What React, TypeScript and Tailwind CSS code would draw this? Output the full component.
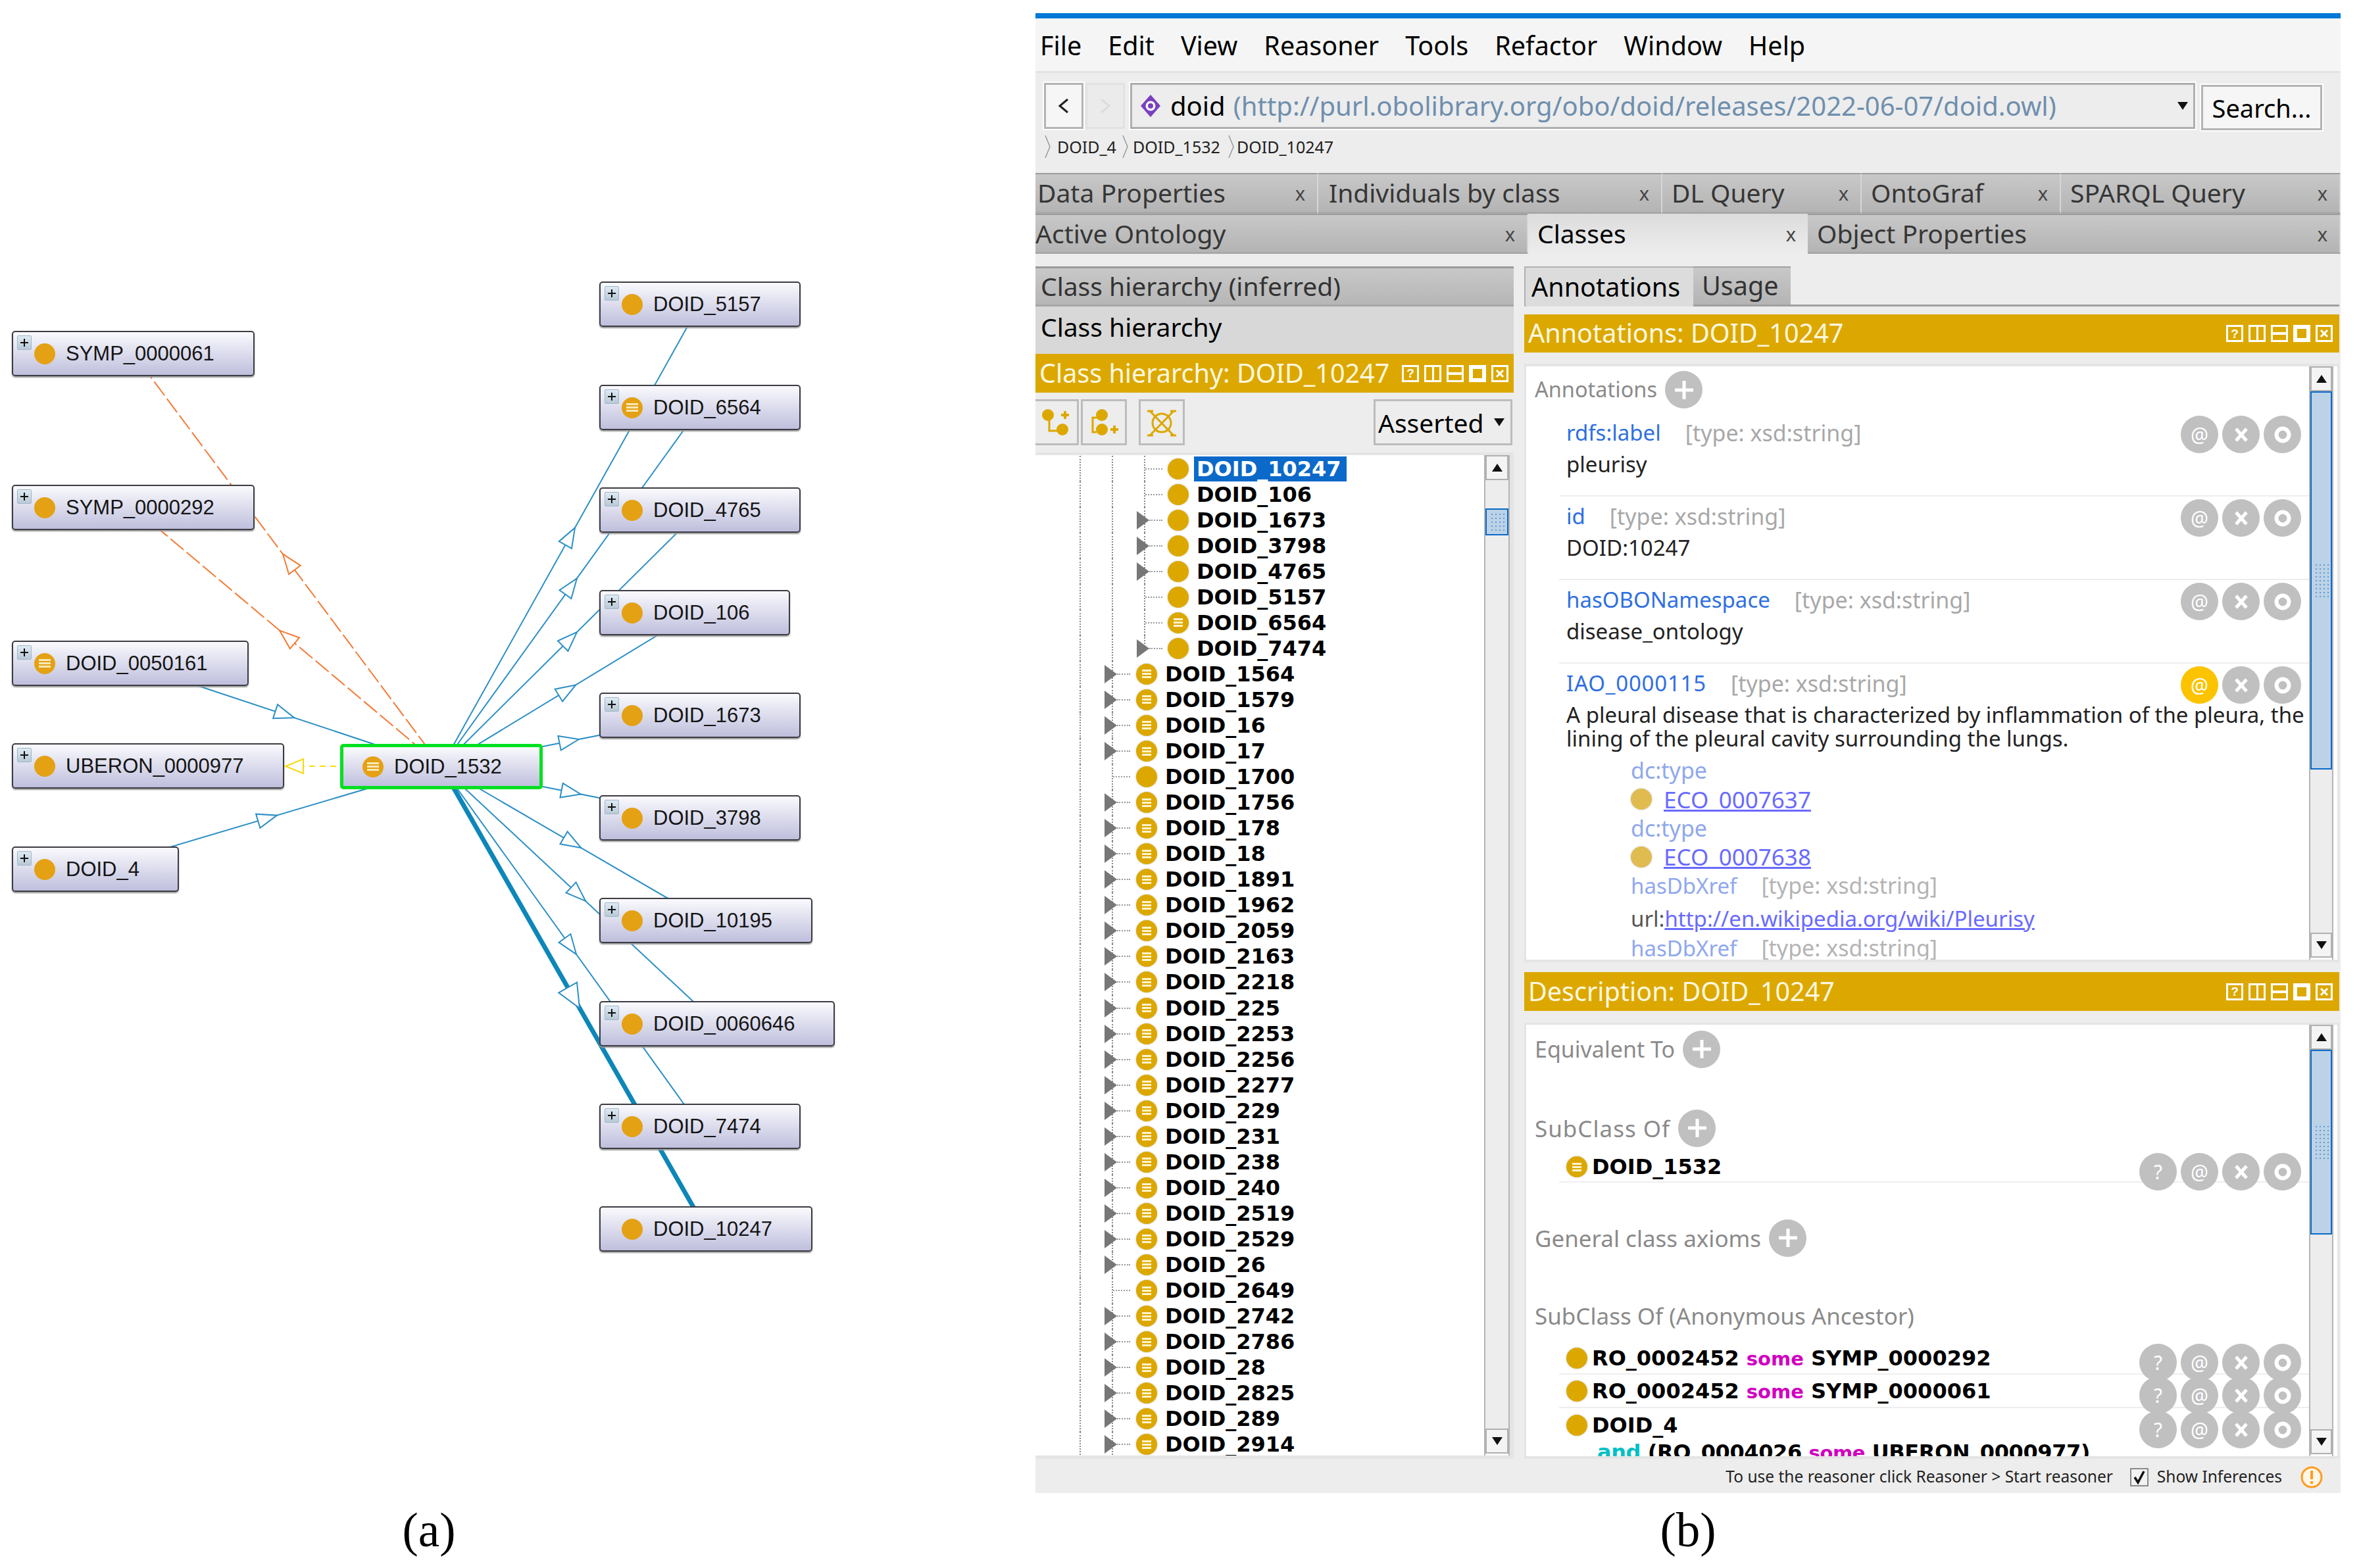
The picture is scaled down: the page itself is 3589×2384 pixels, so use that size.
import React from "react";

type N = { id: string; x: number; y: number; w: number; plus?: boolean; lines?: boolean; selected?: boolean };

const nodes: N[] = [
  { id: "SYMP_0000061", x: 18, y: 503, w: 369, plus: true },
  { id: "SYMP_0000292", x: 18, y: 737, w: 369, plus: true },
  { id: "DOID_0050161", x: 18, y: 974, w: 360, plus: true, lines: true },
  { id: "UBERON_0000977", x: 18, y: 1130, w: 414, plus: true },
  { id: "DOID_4", x: 18, y: 1287, w: 254, plus: true },
  { id: "DOID_1532", x: 517, y: 1131, w: 308, lines: true, selected: true },
  { id: "DOID_5157", x: 911, y: 428, w: 306, plus: true },
  { id: "DOID_6564", x: 911, y: 585, w: 306, plus: true, lines: true },
  { id: "DOID_4765", x: 911, y: 741, w: 306, plus: true },
  { id: "DOID_106", x: 911, y: 897, w: 290, plus: true },
  { id: "DOID_1673", x: 911, y: 1053, w: 306, plus: true },
  { id: "DOID_3798", x: 911, y: 1209, w: 306, plus: true },
  { id: "DOID_10195", x: 911, y: 1365, w: 324, plus: true },
  { id: "DOID_0060646", x: 911, y: 1522, w: 358, plus: true },
  { id: "DOID_7474", x: 911, y: 1678, w: 306, plus: true },
  { id: "DOID_10247", x: 911, y: 1834, w: 324 },
];

const center = (id: string) => {
  const n = nodes.find((m) => m.id === id)!;
  return { x: n.x + n.w / 2, y: n.y + 34.5 };
};

type E = { to: string; from?: string; tip: number; kind?: "blue" | "thick" | "orange" | "yellow" };
const edges: E[] = [
  { to: "DOID_5157", tip: 874 },
  { to: "DOID_6564", tip: 877 },
  { to: "DOID_4765", tip: 877 },
  { to: "DOID_106", tip: 875 },
  { to: "DOID_1673", tip: 880 },
  { to: "DOID_3798", tip: 883 },
  { to: "DOID_10195", tip: 883 },
  { to: "DOID_0060646", tip: 890 },
  { to: "DOID_7474", tip: 876 },
  { to: "DOID_10247", tip: 881, kind: "thick" },
  { from: "DOID_0050161", to: "DOID_1532", tip: 447 },
  { from: "DOID_4", to: "DOID_1532", tip: 421 },
  { to: "UBERON_0000977", tip: 434, kind: "yellow" },
  { to: "SYMP_0000061", tip: 430, kind: "orange" },
  { to: "SYMP_0000292", tip: 425, kind: "orange" },
];

function GraphEdge({ e }: { e: E }) {
  const a = center(e.from ?? "DOID_1532");
  const b = center(e.to);
  const t = (e.tip - a.x) / (b.x - a.x);
  const tx = e.tip;
  const ty = a.y + t * (b.y - a.y);
  const len = Math.hypot(b.x - a.x, b.y - a.y);
  const ux = (b.x - a.x) / len;
  const uy = (b.y - a.y) / len;
  const kind = e.kind ?? "blue";
  const L = kind === "thick" ? 36 : kind === "yellow" ? 27 : 30;
  const hw = kind === "thick" ? 16 : 11;
  const bx = tx - L * ux;
  const by = ty - L * uy;
  const pts = `${tx},${ty} ${bx - uy * hw},${by + ux * hw} ${bx + uy * hw},${by - ux * hw}`;
  const color = kind === "thick" ? "#0d86b9" : kind === "orange" ? "#f47a35" : kind === "yellow" ? "#f7da10" : "#2c8fc6";
  const arrowColor = kind === "thick" ? "#2c8fc6" : color;
  const w = kind === "thick" ? 7 : 2;
  const dash = kind === "orange" ? "26 6" : kind === "yellow" ? "9 7" : undefined;
  return (
    <g>
      <line x1={a.x} y1={a.y} x2={b.x} y2={b.y} stroke={color} strokeWidth={w} strokeDasharray={dash} />
      <polygon points={pts} fill="#fff" stroke={arrowColor} strokeWidth={2} />
    </g>
  );
}

function Bars({ w, h, gap }: { w: string; h: string; gap: string }) {
  return (
    <div className={`flex flex-col ${gap}`}>
      <div className={`${w} ${h} bg-[#f8e8b8]`} />
      <div className={`${w} ${h} bg-[#f8e8b8]`} />
      <div className={`${w} ${h} bg-[#f8e8b8]`} />
    </div>
  );
}

function GraphNode({ n }: { n: N }) {
  return (
    <div
      className={`absolute h-[69px] flex items-center rounded-[5px] bg-gradient-to-b from-[#fafafd] to-[#bfbfdd] ${
        n.selected
          ? "border-[5px] border-[#00e020] pl-[29px]"
          : "border-2 border-[#3c3c44] pl-[32px] shadow-[0_2px_2px_#9a9a9a]"
      }`}
      style={{ left: n.x, top: n.y, width: n.w }}
    >
      {n.plus && (
        <div className="absolute left-[6px] top-[5px] w-[22px] h-[22px] flex items-center justify-center border border-[#9fb7c9] rounded-[2px] bg-gradient-to-b from-[#dfeaf2] to-[#b8c9d6]">
          <svg width="14" height="14" viewBox="0 0 14 14">
            <path d="M7 1v12M1 7h12" stroke="#111" strokeWidth="2" />
          </svg>
        </div>
      )}
      <div className="w-[32px] h-[32px] shrink-0 rounded-full bg-[#e4a114] flex items-center justify-center">
        {n.lines && <Bars w="w-[18px]" h="h-[3px]" gap="gap-[2px]" />}
      </div>
      <span className="ml-[16px] font-['Liberation_Sans',sans-serif] text-[31px] leading-none whitespace-nowrap text-[#151515]">
        {n.id}
      </span>
    </div>
  );
}

function Graph() {
  return (
    <div className="relative w-[1574px] h-[2270px]">
      <svg className="absolute inset-0" width="1574" height="2270">
        {edges.map((e) => (
          <GraphEdge key={e.to + (e.from ?? "")} e={e} />
        ))}
      </svg>
      {nodes.map((n) => (
        <GraphNode key={n.id} n={n} />
      ))}
    </div>
  );
}

function Caption({ children, cls }: { children: React.ReactNode; cls: string }) {
  return (
    <div className={`${cls} h-[114px] pt-[12px] text-center font-['Liberation_Serif',serif] text-[73px] leading-[90px] text-black`}>
      {children}
    </div>
  );
}

const row1 = [
  { t: "Data Properties", w: "w-[430px]", p: "pl-[3px]" },
  { t: "Individuals by class", w: "w-[523px]", p: "pl-[16px]" },
  { t: "DL Query", w: "w-[303px]", p: "pl-[14px]" },
  { t: "OntoGraf", w: "w-[303px]", p: "pl-[14px]" },
  { t: "SPARQL Query", w: "w-[425px]", p: "pl-[14px]" },
];
const row2 = [
  { t: "Active Ontology", w: "w-[749px]", p: "pl-[0px]" },
  { t: "Classes", w: "w-[425px]", p: "pl-[14px]", active: true },
  { t: "Object Properties", w: "w-[810px]", p: "pl-[14px]" },
];

function Tab({ t, w, p, active }: { t: string; w: string; p: string; active?: boolean }) {
  return (
    <div
      className={`${w} ${p} h-full flex items-center justify-between pr-[18px] text-[39px] leading-none whitespace-nowrap ${
        active
          ? "bg-gradient-to-b from-[#dcdcdc] to-[#ededed] text-black"
          : "bg-gradient-to-b from-[#c8c8c8] to-[#b4b4b4] text-[#363636] border-r-2 border-[#d6d6d6] border-b-[3px] border-b-[#a8a8a8] border-t-2 border-t-[#9c9c9c]"
      }`}
    >
      <span className="-mt-[2px]">{t}</span>
      <span className="text-[29px] text-[#444]">x</span>
    </div>
  );
}

function TriDown({ cls = "" }: { cls?: string }) {
  return (
    <svg className={cls} width="18" height="14" viewBox="0 0 18 14">
      <path d="M1 1h16L9 13z" fill="#111" />
    </svg>
  );
}
function TriUp({ cls = "" }: { cls?: string }) {
  return (
    <svg className={cls} width="18" height="14" viewBox="0 0 18 14">
      <path d="M1 13h16L9 1z" fill="#111" />
    </svg>
  );
}

function Chevron() {
  return (
    <svg className="shrink-0" width="10" height="36" viewBox="0 0 10 36">
      <path d="M1 1l7 17-7 17" fill="none" stroke="#999" strokeWidth="1.5" />
    </svg>
  );
}

function TopBars() {
  return (
    <>
      <div className="h-[8px] bg-[#0078d7]" />
      <div className="h-[83px] bg-[#f5f5f5] border-b-[3px] border-[#e3e3e3] flex items-center gap-[40px] pl-[7px] pt-[4px] text-[39.5px] leading-none text-black">
        {["File", "Edit", "View", "Reasoner", "Tools", "Refactor", "Window", "Help"].map((m) => (
          <span key={m}>{m}</span>
        ))}
      </div>
      <div className="h-[94px] flex items-start pl-[13px]">
        <div className="mt-[15px] w-[60px] h-[70px] mr-[3px] border-[3px] border-[#b4b4b4] bg-[#f6f6f6] flex items-center justify-center shadow-[0_0_0_2px_#fff]">
          <svg width="20" height="26" viewBox="0 0 20 26">
            <path d="M16 3L4 13l12 10" fill="none" stroke="#222" strokeWidth="3" />
          </svg>
        </div>
        <div className="mt-[15px] w-[60px] h-[70px] mr-[8px] border-[3px] border-[#e2e2e2] bg-[#ebebeb] flex items-center justify-center">
          <svg width="20" height="26" viewBox="0 0 20 26">
            <path d="M4 3l12 10L4 23" fill="none" stroke="#dcdcdc" strokeWidth="3" />
          </svg>
        </div>
        <div className="mt-[15px] w-[1619px] h-[70px] border-[3px] border-[#aeaeae] bg-[#ededed] shadow-[0_0_0_2px_#fff] flex items-center pl-[12px] pr-[7px] text-[40px] leading-none whitespace-nowrap">
          <svg className="shrink-0" width="32" height="36" viewBox="0 0 32 36">
            <path d="M16 1l15 17-15 17L1 18z" fill="#7b3fbe" />
            <circle cx="16" cy="18" r="7.5" fill="#fff" />
            <circle cx="16" cy="18" r="4" fill="#7b3fbe" />
          </svg>
          <span className="ml-[14px] text-black">doid</span>
          <span className="ml-[12px] text-[#6f8fae]">(http://purl.obolibrary.org/obo/doid/releases/2022-06-07/doid.owl)</span>
          <TriDown cls="ml-auto" />
        </div>
        <div className="ml-[9px] mt-[18px] w-[184px] h-[69px] border-[3px] border-[#b4b4b4] bg-[#f6f6f6] shadow-[0_0_0_2px_#fff] flex items-center justify-center text-[38px] leading-none text-black">
          Search...
        </div>
      </div>
      <div className="h-[58px]">
        <div className="h-[36px] flex items-center pl-[14px] text-[25px] leading-none text-[#222]">
          <Chevron />
          <span className="ml-[9px] w-[99px]">DOID_4</span>
          <Chevron />
          <span className="ml-[6px] w-[145px]">DOID_1532</span>
          <Chevron />
          <span className="ml-[3px]">DOID_10247</span>
        </div>
      </div>
      <div className="h-[62px] flex">
        {row1.map((t) => (
          <Tab key={t.t} {...t} />
        ))}
      </div>
      <div className="h-[61px] flex">
        {row2.map((t) => (
          <Tab key={t.t} {...t} />
        ))}
      </div>
    </>
  );
}

function HeaderIcons() {
  return (
    <div className="flex gap-[8px] items-center">
      <div className="w-[26px] h-[26px] border-[3px] border-white flex items-center justify-center text-[19px] leading-none font-bold text-white font-['Liberation_Sans',sans-serif]">?</div>
      <div className="w-[26px] h-[26px] border-[3px] border-white flex justify-center">
        <div className="w-[3px] h-full bg-white" />
      </div>
      <div className="w-[26px] h-[26px] border-[3px] border-white flex flex-col justify-center">
        <div className="w-full h-[4px] bg-white" />
      </div>
      <div className="w-[26px] h-[26px] border-[6px] border-white" />
      <div className="w-[26px] h-[26px] border-[3px] border-white flex items-center justify-center">
        <svg width="14" height="14" viewBox="0 0 14 14">
          <path d="M2 2l10 10M12 2L2 12" stroke="#fff" strokeWidth="3" />
        </svg>
      </div>
    </div>
  );
}

function ViewHeader({ title, h, pr }: { title: string; h: string; pr: string }) {
  return (
    <div className={`${h} ${pr} bg-[#dca800] flex items-center justify-between pl-[6px] text-[39.5px] leading-none text-[#fff8e0] whitespace-nowrap`}>
      <span>{title}</span>
      <HeaderIcons />
    </div>
  );
}

function SmallCircle({ lines, cls = "bg-[#dca800]" }: { lines?: boolean; cls?: string }) {
  return (
    <div className={`w-[32px] h-[32px] shrink-0 rounded-full ${cls} shadow-[0_0_3px_#c8c8c8] flex items-center justify-center`}>
      {lines && (
        <div className="flex flex-col gap-[2px]">
          <div className="w-[14px] h-[3px] bg-[#fff4d0]" />
          <div className="w-[14px] h-[3px] bg-[#fff4d0]" />
          <div className="w-[14px] h-[3px] bg-[#fff4d0]" />
        </div>
      )}
    </div>
  );
}

function ScrollButton({ up, h }: { up?: boolean; h: string }) {
  return (
    <div className={`${h} shrink-0 border-2 border-[#b0b0b0] bg-[#f4f4f4] flex items-center justify-center`}>
      {up ? <TriUp /> : <TriDown />}
    </div>
  );
}

function Grip({ h }: { h: string }) {
  return (
    <div className={`${h} w-[22px] bg-[radial-gradient(#5b9bd8_1.5px,transparent_1.5px)] bg-[length:6px_6px]`} />
  );
}

const level2 = [
  { id: "DOID_10247", sel: true },
  { id: "DOID_106" },
  { id: "DOID_1673", tri: true },
  { id: "DOID_3798", tri: true },
  { id: "DOID_4765", tri: true },
  { id: "DOID_5157" },
  { id: "DOID_6564", lines: true },
  { id: "DOID_7474", tri: true, last: true },
];
const level1 = "1564 1579 16 17 1700 1756 178 18 1891 1962 2059 2163 2218 225 2253 2256 2277 229 231 238 240 2519 2529 26 2649 2742 2786 28 2825 289 2914".split(" ");

function Triangle() {
  return (
    <svg className="-ml-[13px] shrink-0" width="19" height="28" viewBox="0 0 19 28">
      <path d="M0 0l19 14L0 28z" fill="#777" />
    </svg>
  );
}

function GuideA() {
  return <div className="w-[49px] self-stretch border-l-2 border-dotted border-[#8a8a8a]" />;
}
function GuideB() {
  return <div className="w-[2px] self-stretch border-l-2 border-dotted border-[#8a8a8a]" />;
}

function TreeLabel({ id, sel }: { id: string; sel?: boolean }) {
  return (
    <span
      className={`ml-[8px] h-[38px] px-[4px] flex items-center font-['DejaVu_Sans',sans-serif] font-bold text-[32px] leading-none whitespace-nowrap ${
        sel ? "bg-[#0b69c9] text-white pr-[8px]" : "text-black"
      }`}
    >
      {id}
    </span>
  );
}

function Tree() {
  return (
    <div className="flex-1 overflow-hidden pt-[1px]">
      {level2.map((r) => (
        <div key={r.id} className="h-[39.06px] flex items-center">
          <div className="w-[67px]" />
          <GuideA />
          <div className="w-[49px] self-stretch border-l-2 border-dotted border-[#8a8a8a]" />
          <div
            className={`w-[2px] border-l-2 border-dotted border-[#8a8a8a] ${r.last ? "self-start h-1/2" : "self-stretch"}`}
          />
          {r.tri && <Triangle />}
          <div className={`${r.tri ? "w-[20px]" : "w-[26px]"} border-t-2 border-dotted border-[#999]`} />
          <div className="ml-[8px]">
            <SmallCircle lines={r.lines} />
          </div>
          <TreeLabel id={r.id} sel={r.sel} />
        </div>
      ))}
      {level1.map((id) => {
        const tri = id !== "1700" && id !== "2649";
        return (
          <div key={id} className="h-[39.06px] flex items-center">
            <div className="w-[67px]" />
            <GuideA />
            <GuideB />
            {tri && <Triangle />}
            <div className={`${tri ? "w-[20px]" : "w-[26px]"} border-t-2 border-dotted border-[#999]`} />
            <div className="ml-[9px]">
              <SmallCircle lines={id !== "1700"} />
            </div>
            <TreeLabel id={`DOID_${id}`} />
          </div>
        );
      })}
    </div>
  );
}

function LeftColumn() {
  return (
    <div className="w-[727px] flex flex-col">
      <div className="h-[61px] bg-gradient-to-b from-[#c8c8c8] to-[#b6b6b6] border-t-[3px] border-t-[#9a9a9a] border-b-[3px] border-b-[#a6a6a6] flex items-center pl-[8px] pb-[2px] text-[39px] leading-none text-[#333]">
        Class hierarchy (inferred)
      </div>
      <div className="h-[72px] bg-[#d8d8d8] flex items-center pl-[8px] pb-[12px] text-[39px] leading-none text-black">
        Class hierarchy
      </div>
      <ViewHeader title="Class hierarchy: DOID_10247" h="h-[59px]" pr="pr-[8px]" />
      <div className="h-[91px] pt-[10px] flex items-start">
        <div className="w-[66px] h-[70px] border-[3px] border-l-0 border-[#bcbcbc] shrink-0">
          <svg width="63" height="64" viewBox="0 0 63 64">
            <circle cx="19" cy="21" r="9" fill="#dca800" />
            <circle cx="41" cy="43" r="9" fill="#dca800" />
            <path d="M21 28v17h14" fill="none" stroke="#dca800" strokeWidth="3" />
            <path d="M45 15v12M39 21h12" stroke="#dca800" strokeWidth="4" />
          </svg>
        </div>
        <div className="ml-[3px] w-[70px] h-[70px] border-[3px] border-[#bcbcbc] shrink-0">
          <svg width="64" height="64" viewBox="0 0 64 64">
            <circle cx="29" cy="21" r="9" fill="#dca800" />
            <circle cx="29" cy="43" r="9" fill="#dca800" />
            <path d="M24 25H15v22h6" fill="none" stroke="#dca800" strokeWidth="3" />
            <path d="M48 37v12M42 43h12" stroke="#dca800" strokeWidth="4" />
          </svg>
        </div>
        <div className="ml-[18px] w-[70px] h-[70px] border-[3px] border-[#bcbcbc] shrink-0">
          <svg width="64" height="64" viewBox="0 0 64 64">
            <circle cx="32" cy="33" r="14" fill="none" stroke="#dca800" strokeWidth="3" />
            <path d="M14 15l36 37M50 15L14 52M10 15h9M45 15h9M10 52h9M45 52h9" fill="none" stroke="#dca800" strokeWidth="3" />
          </svg>
        </div>
        <div className="ml-[287px] w-[211px] h-[70px] border-[3px] border-[#bcbcbc] flex items-center pl-[4px] pr-[8px] justify-between text-[39px] leading-none text-black">
          <span>Asserted</span>
          <TriDown />
        </div>
      </div>
      <div className="h-[1530px] border-t-[4px] border-b-[5px] border-r-[6px] border-[#e4e4e4] bg-white flex overflow-hidden">
        <Tree />
        <div className="w-[39px] flex flex-col bg-[#ededed] border-x-2 border-[#b4b4b4]">
          <ScrollButton up h="h-[38px]" />
          <div className="h-[43px] shrink-0" />
          <div className="h-[41px] shrink-0 border-2 border-[#0b69c9] bg-[#bcd2e6] flex items-center justify-center">
            <Grip h="h-[30px]" />
          </div>
          <div className="flex-1" />
          <ScrollButton h="h-[38px]" />
          <div className="h-[3px] bg-white" />
        </div>
      </div>
    </div>
  );
}

function Round({ children, yellow }: { children: React.ReactNode; yellow?: boolean }) {
  return (
    <div className={`w-[57px] h-[57px] shrink-0 rounded-full ${yellow ? "bg-[#fcc300]" : "bg-[#c0c0c0]"} flex items-center justify-center text-white text-[30px] leading-none`}>
      {children}
    </div>
  );
}

function Actions({ q, yellow, cls = "" }: { q?: boolean; yellow?: boolean; cls?: string }) {
  return (
    <div className={`flex gap-[6px] pr-[12px] ${cls}`}>
      {q && <Round>?</Round>}
      <Round yellow={yellow}>@</Round>
      <Round>
        <svg width="24" height="24" viewBox="0 0 24 24">
          <path d="M4 3l16 18M20 3L4 21" stroke="#fff" strokeWidth="5" />
        </svg>
      </Round>
      <Round>
        <svg width="28" height="28" viewBox="0 0 28 28">
          <circle cx="14" cy="14" r="9.5" fill="none" stroke="#fff" strokeWidth="6" />
        </svg>
      </Round>
    </div>
  );
}

function PlusHeading({ title, cls, size, noPlus }: { title: string; cls: string; size: string; noPlus?: boolean }) {
  return (
    <div className={`${cls} ${size} flex items-center pl-[13px] leading-none text-[#8a8a8a] whitespace-nowrap`}>
      <span>{title}</span>
      {!noPlus && (
        <div className="ml-[12px] w-[57px] h-[57px] rounded-full bg-[#c0c0c0] flex items-center justify-center">
          <svg width="32" height="32" viewBox="0 0 32 32">
            <path d="M16 2v28M2 16h28" stroke="#fff" strokeWidth="5" />
          </svg>
        </div>
      )}
    </div>
  );
}

const TYPE = "[type: xsd:string]";

function AnnotRow({ label, value }: { label: string; value: string }) {
  return (
    <div className="h-[127px] ml-[50px] pl-[11px] border-b-2 border-[#eeeeee] flex justify-between">
      <div className="pt-[12px] text-[33px] leading-[36px]">
        <div className="flex gap-[37px] items-center">
          <span className="text-[#2f6fe0]">{label}</span>
          <span className="text-[#a8a8a8] text-[34px]">{TYPE}</span>
        </div>
        <div className="mt-[12px] text-[#222]">{value}</div>
      </div>
      <Actions cls="pt-[4px]" />
    </div>
  );
}

function AnnotationsPanel() {
  return (
    <div className="h-[910px] border-x-[3px] border-y-[4px] border-[#e4e4e4] bg-white flex overflow-hidden">
      <div className="w-[1190px] overflow-hidden">
        <PlusHeading title="Annotations" cls="h-[71px]" size="text-[32.5px]" />
        <AnnotRow label="rdfs:label" value="pleurisy" />
        <AnnotRow label="id" value="DOID:10247" />
        <AnnotRow label="hasOBONamespace" value="disease_ontology" />
        <div className="ml-[50px] pl-[11px] h-[48px] flex justify-between pt-[12px] text-[33px] leading-[36px]">
          <div className="flex gap-[37px] items-center h-[36px]">
            <span className="text-[#2f6fe0] tracking-[0.8px]">IAO_0000115</span>
            <span className="text-[#a8a8a8] text-[34px]">{TYPE}</span>
          </div>
          <Actions yellow cls="-mt-[8px] h-[57px]" />
        </div>
        <div className="ml-[61px] mt-[12px] w-[1135px] text-[33px] leading-[36px] text-[#222]">
          A pleural disease that is characterized by inflammation of the pleura, the lining of the pleural cavity surrounding the lungs.
        </div>
        <div className="ml-[159px] mt-[8px] text-[33px] leading-none">
          <div className="h-[44px] flex items-center text-[#8fa8ee] text-[34px]">dc:type</div>
          <div className="h-[44px] flex items-center">
            <SmallCircle cls="bg-[#e0bc50]" />
            <span className="ml-[18px] text-[35px] text-[#6a6aff] underline">ECO_0007637</span>
          </div>
          <div className="h-[44px] flex items-center text-[#8fa8ee] text-[34px]">dc:type</div>
          <div className="h-[43px] flex items-center">
            <SmallCircle cls="bg-[#e0bc50]" />
            <span className="ml-[18px] text-[35px] text-[#6a6aff] underline">ECO_0007638</span>
          </div>
          <div className="h-[44px] flex items-center gap-[37px]">
            <span className="text-[#8fa8ee]">hasDbXref</span>
            <span className="text-[#b4b4b4] text-[34px]">{TYPE}</span>
          </div>
          <div className="mt-[3px] h-[50px] flex items-center">
            <span className="text-[#555]">url:</span>
            <span className="text-[#6a6aff] underline">http://en.wikipedia.org/wiki/Pleurisy</span>
          </div>
          <div className="-mt-[2px] h-[44px] flex items-center gap-[37px]">
            <span className="text-[#8fa8ee]">hasDbXref</span>
            <span className="text-[#b4b4b4] text-[34px]">{TYPE}</span>
          </div>
        </div>
      </div>
      <div className="w-[37px] flex flex-col bg-[#ededed] border-x-2 border-[#b4b4b4]">
        <ScrollButton up h="h-[38px]" />
        <div className="h-[575px] shrink-0 border-2 border-[#0b69c9] bg-[#bcd2e6] flex items-center justify-center">
          <Grip h="h-[54px]" />
        </div>
        <div className="flex-1" />
        <ScrollButton h="h-[38px]" />
        <div className="h-[3px] bg-white" />
      </div>
    </div>
  );
}

const BOLD = "font-['DejaVu_Sans',sans-serif] font-bold text-[32px] leading-none text-black whitespace-nowrap";

function ExprRow({ h, children, pt }: { h: string; children: React.ReactNode; pt: string }) {
  return (
    <div className={`${h} ml-[50px] pl-[11px] border-b-2 border-[#eeeeee] flex justify-between items-start`}>
      <div className={`${pt} flex items-center gap-[7px] ${BOLD}`}>{children}</div>
    </div>
  );
}

function Some() {
  return <span className="text-[#d000c0] text-[29px]">some</span>;
}

function ExprActions({ top }: { top: string }) {
  return (
    <div className={`h-0 overflow-visible flex justify-end ${top}`}>
      <Actions q />
    </div>
  );
}

function DescriptionPanel() {
  return (
    <div className="h-[663px] border-x-[3px] border-t-[3px] border-b-[4px] border-[#e4e4e4] bg-white flex overflow-hidden">
      <div className="w-[1190px] overflow-hidden">
        <PlusHeading title="Equivalent To" cls="h-[74px]" size="text-[34px]" />
        <PlusHeading title="SubClass Of" cls="mt-[46px] h-[74px] tracking-[1px]" size="text-[35px]" />
        <ExprActions top="translate-y-[1px]" />
        <ExprRow h="h-[46px]" pt="pt-[6px]">
          <SmallCircle lines />
          <span>DOID_1532</span>
        </ExprRow>
        <PlusHeading title="General class axioms" cls="mt-[47px] h-[74px]" size="text-[35px]" />
        <PlusHeading title="SubClass Of (Anonymous Ancestor)" cls="mt-[44px] h-[74px]" size="text-[35px]" noPlus />
        <div className="mt-[3px]">
          <ExprActions top="translate-y-[3px]" />
          <ExprRow h="h-[50px]" pt="pt-[9px]">
            <SmallCircle />
            <span>
              RO_0002452 <Some /> SYMP_0000292
            </span>
          </ExprRow>
          <ExprActions top="translate-y-[3px]" />
          <ExprRow h="h-[51px]" pt="pt-[9px]">
            <SmallCircle />
            <span>
              RO_0002452 <Some /> SYMP_0000061
            </span>
          </ExprRow>
          <ExprActions top="translate-y-[4px]" />
          <div className="ml-[50px] pl-[11px] pt-[10px]">
            <div className={`flex items-center gap-[7px] ${BOLD}`}>
              <SmallCircle />
              <span>DOID_4</span>
            </div>
            <div className={`ml-[47px] mt-[9px] tracking-[-0.4px] ${BOLD}`}>
              <span className="text-[#00c0c4]">and</span> (RO_0004026 <Some /> UBERON_0000977)
            </div>
          </div>
        </div>
      </div>
      <div className="w-[37px] flex flex-col bg-[#ededed] border-x-2 border-[#b4b4b4]">
        <ScrollButton up h="h-[38px]" />
        <div className="h-[281px] shrink-0 border-2 border-[#0b69c9] bg-[#bcd2e6] flex items-center justify-center">
          <Grip h="h-[54px]" />
        </div>
        <div className="flex-1" />
        <ScrollButton h="h-[38px]" />
        <div className="h-[3px] bg-white" />
      </div>
    </div>
  );
}

function RightColumn() {
  return (
    <div className="w-[1239px] flex flex-col">
      <div className="h-[61px] flex shrink-0">
        <div className="w-[257px] border-l-2 border-t-2 border-[#b0b0b0] bg-[#dcdcdc] flex items-center pl-[9px] text-[39.5px] leading-none text-black">
          Annotations
        </div>
        <div className="w-[148px] bg-gradient-to-b from-[#c8c8c8] to-[#b4b4b4] border-t-2 border-t-[#a0a0a0] border-b-[3px] border-b-[#a0a0a0] flex items-center pl-[13px] text-[39.5px] leading-none text-[#333]">
          Usage
        </div>
        <div className="flex-1 border-b-[3px] border-[#a0a0a0]" />
      </div>
      <div className="mt-[12px]">
        <ViewHeader title="Annotations: DOID_10247" h="h-[58px]" pr="pr-[10px]" />
      </div>
      <div className="mt-[17px]">
        <AnnotationsPanel />
      </div>
      <div className="mt-[15px]">
        <ViewHeader title="Description: DOID_10247" h="h-[59px]" pr="pr-[10px]" />
      </div>
      <div className="mt-[18px]">
        <DescriptionPanel />
      </div>
    </div>
  );
}

function StatusBar() {
  return (
    <div className="h-[52px] pt-[3px] flex items-center justify-end pr-[27px] text-[24.5px] leading-none text-[#222] whitespace-nowrap">
      <span>To use the reasoner click Reasoner &gt; Start reasoner</span>
      <div className="ml-[26px] w-[28px] h-[28px] border-2 border-[#8a8a8a] bg-[#f2f2f2] flex items-center justify-center">
        <svg width="20" height="22" viewBox="0 0 20 22">
          <path d="M3 11l5 8 9-17" fill="none" stroke="#111" strokeWidth="3.5" />
        </svg>
      </div>
      <span className="ml-[13px]">Show Inferences</span>
      <svg className="ml-[28px]" width="34" height="36" viewBox="0 0 34 36">
        <circle cx="17" cy="18" r="15" fill="#fff6e6" stroke="#ff9c22" strokeWidth="3" />
        <path d="M17 8v13M17 24v4" stroke="#ff9c22" strokeWidth="4" />
      </svg>
    </div>
  );
}

function Protege() {
  return (
    <div className="w-[1984px] h-[2250px] bg-[#ededed] flex flex-col font-['Noto_Sans',sans-serif]">
      <TopBars />
      <div className="mt-[19px] flex gap-[16px]">
        <LeftColumn />
        <RightColumn />
      </div>
      <StatusBar />
    </div>
  );
}

export default function App() {
  return (
    <div className="w-[3589px] h-[2384px] bg-white flex overflow-hidden">
      <div className="w-[1574px] shrink-0 flex flex-col">
        <Graph />
        <Caption cls="w-[1304px]">(a)</Caption>
      </div>
      <div className="w-[1984px] shrink-0 pt-[20px] flex flex-col">
        <Protege />
        <Caption cls="w-[1984px]">(b)</Caption>
      </div>
    </div>
  );
}
